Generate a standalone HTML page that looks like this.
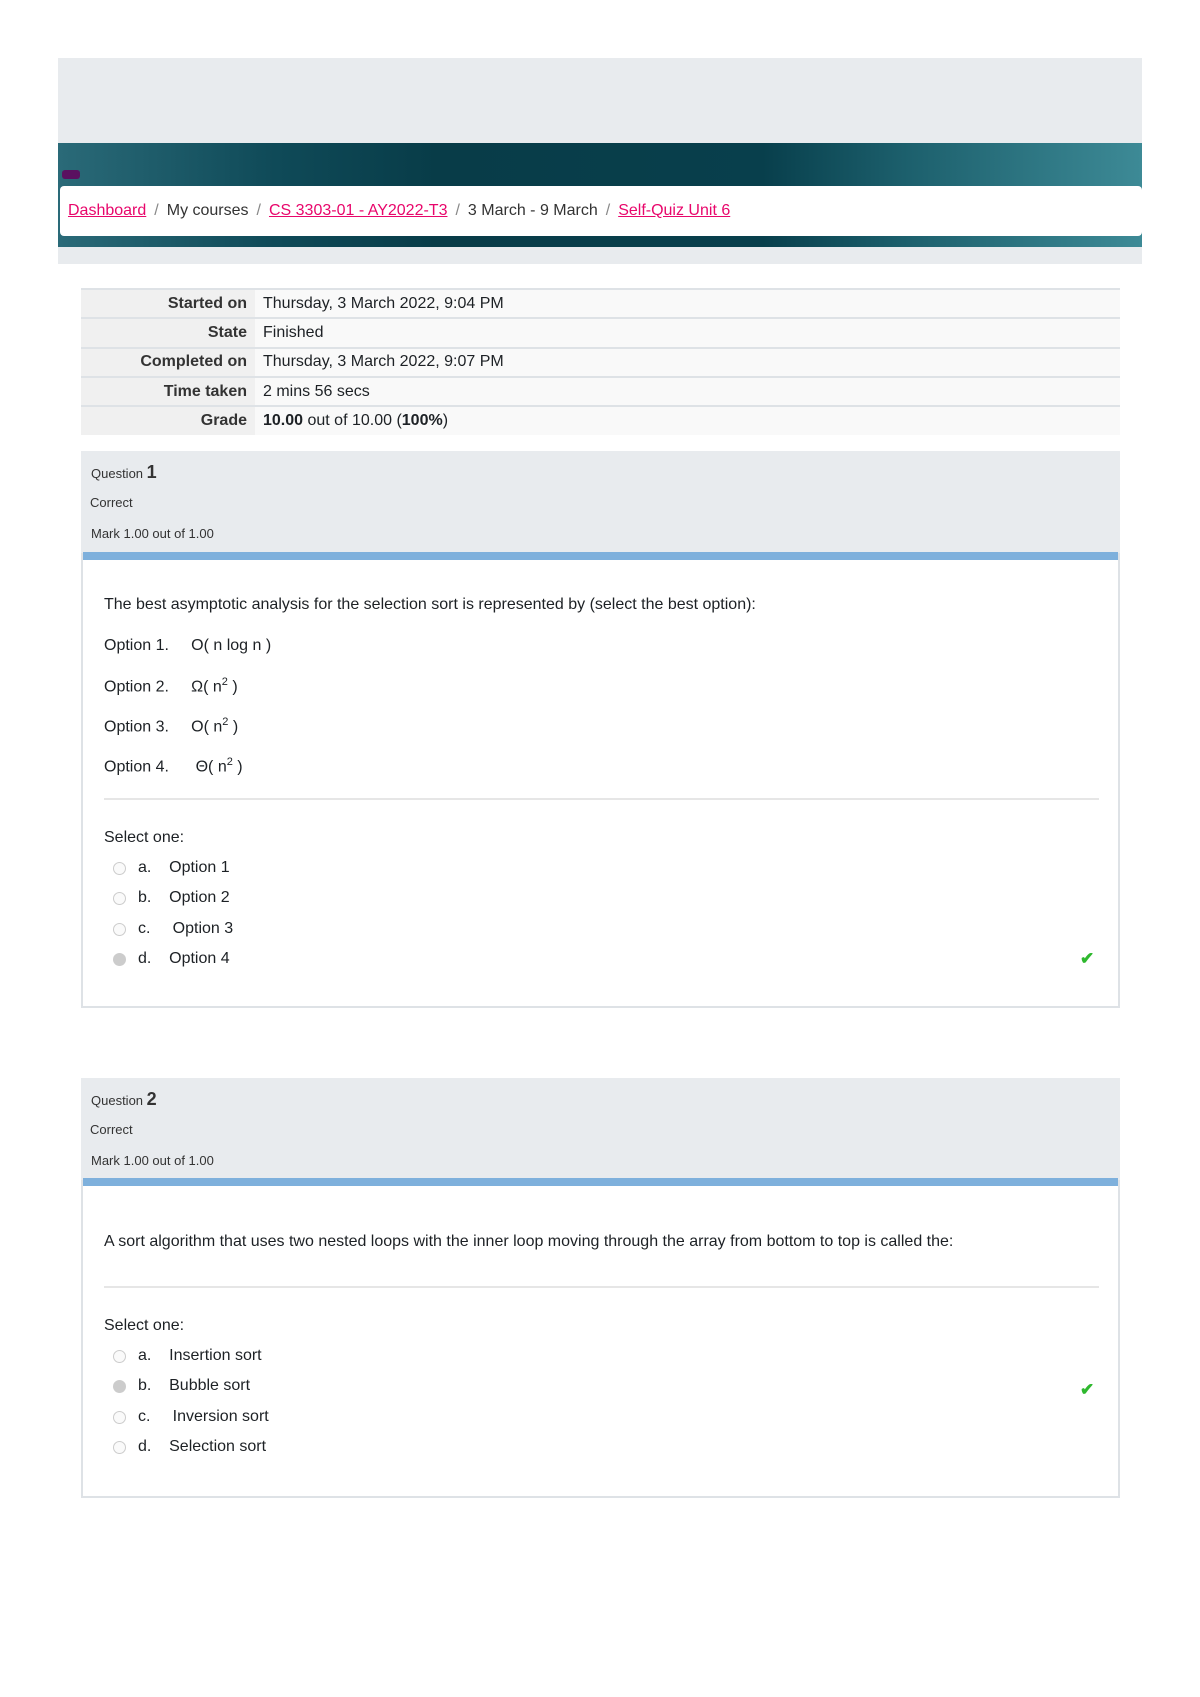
<!DOCTYPE html>
<html><head><meta charset="utf-8"><style>
*{margin:0;padding:0;box-sizing:border-box}
body{width:1200px;height:1697px;background:#fff;font-family:"Liberation Sans",sans-serif;color:#1d2125;position:relative;overflow:hidden}
.a{position:absolute;white-space:nowrap}
.hdr{left:58px;top:58px;width:1084px;height:206px;background:#e8ebee}
.ban{left:58px;top:143px;width:1084px;height:104px;background:linear-gradient(90deg,#2a6a78 0%,#0f4a58 20%,#083c48 35%,#083f4c 65%,#1c5f6c 78%,#3d8a96 100%)}
.crumb{left:60px;top:186px;width:1082px;height:50px;background:#fff;border-radius:4px;font-size:16px;line-height:50px;padding-left:8px;color:#333}
.crumb a{color:#e8066b;text-decoration:underline}
.crumb .s{color:#888;margin:0 8px}
table{position:absolute;left:81px;top:288px;width:1039px;border-collapse:collapse;font-size:16px}
td{height:29.3px;border-top:2px solid #dee2e6;padding:0 8px}
td.l{width:174px;background:#f0f0f0;text-align:right;font-weight:bold;color:#333}
td.v{background:#f9f9f9}
.card{left:81px;width:1039px;border:2px solid #dee2e6;background:#fff}
.qh{left:81px;width:1039px;background:#e8ebee;font-size:13px;color:#333}
.bar{left:83px;width:1035px;height:8px;background:#7eb0dc}
.t{font-size:16px;color:#1d2125}
.hr{left:104px;width:995px;height:2px;background:#e6e6e6}
.r{width:13px;height:13px;border-radius:50%;border:1px solid #ccc;background:#fafafa}
.r.on{background:#ccc}
.ck{color:#2eb82e;font-size:17px;font-weight:bold}
</style></head><body>
<div class="a hdr"></div>
<div class="a ban"></div>
<div class="a" style="left:62px;top:170px;width:18px;height:9px;background:#5a1060;border-radius:3px"></div>
<div class="a crumb"><a>Dashboard</a><span class="s">/</span>My courses<span class="s">/</span><a>CS 3303-01 - AY2022-T3</a><span class="s">/</span>3 March - 9 March<span class="s">/</span><a>Self-Quiz Unit 6</a></div>

<table>
<tr><td class="l">Started on</td><td class="v">Thursday, 3 March 2022, 9:04 PM</td></tr>
<tr><td class="l">State</td><td class="v">Finished</td></tr>
<tr><td class="l">Completed on</td><td class="v">Thursday, 3 March 2022, 9:07 PM</td></tr>
<tr><td class="l">Time taken</td><td class="v">2 mins 56 secs</td></tr>
<tr><td class="l">Grade</td><td class="v"><b>10.00</b> out of 10.00 (<b>100%</b>)</td></tr>
</table>

<!-- Q1 -->
<div class="a card" style="top:451px;height:557px"></div>
<div class="a qh" style="top:451px;height:102px"></div>
<div class="a bar" style="top:552px"></div>
<div class="a" style="left:91px;top:462px;font-size:13px;color:#333">Question <b style="font-size:18px">1</b></div>
<div class="a" style="left:90px;top:495px;font-size:13px;color:#333">Correct</div>
<div class="a" style="left:91px;top:526px;font-size:13px;color:#333">Mark 1.00 out of 1.00</div>
<div class="a t" style="left:104px;top:596px">The best asymptotic analysis for the selection sort is represented by (select the best option):</div>
<div class="a t" style="left:104px;top:637px">Option 1.&nbsp;&nbsp;&nbsp;&nbsp; O( n log n )</div>
<div class="a t" style="left:104px;top:676px">Option 2.&nbsp;&nbsp;&nbsp;&nbsp; Ω( n<sup style="font-size:11px">2</sup> )</div>
<div class="a t" style="left:104px;top:716px">Option 3.&nbsp;&nbsp;&nbsp;&nbsp; O( n<sup style="font-size:11px">2</sup> )</div>
<div class="a t" style="left:104px;top:756px">Option 4.&nbsp;&nbsp;&nbsp;&nbsp;&nbsp; Θ( n<sup style="font-size:11px">2</sup> )</div>
<div class="a hr" style="top:798px"></div>
<div class="a t" style="left:104px;top:829px">Select one:</div>
<div class="a r" style="left:113px;top:862px"></div><div class="a t" style="left:138px;top:859px">a.&nbsp;&nbsp;&nbsp; Option 1</div>
<div class="a r" style="left:113px;top:892px"></div><div class="a t" style="left:138px;top:889px">b.&nbsp;&nbsp;&nbsp; Option 2</div>
<div class="a r" style="left:113px;top:923px"></div><div class="a t" style="left:138px;top:920px">c.&nbsp;&nbsp;&nbsp;&nbsp; Option 3</div>
<div class="a r on" style="left:113px;top:953px"></div><div class="a t" style="left:138px;top:950px">d.&nbsp;&nbsp;&nbsp; Option 4</div>
<div class="a ck" style="left:1080px;top:949px">✔</div>

<!-- Q2 -->
<div class="a card" style="top:1078px;height:420px"></div>
<div class="a qh" style="top:1078px;height:102px"></div>
<div class="a bar" style="top:1178px"></div>
<div class="a" style="left:91px;top:1089px;font-size:13px;color:#333">Question <b style="font-size:18px">2</b></div>
<div class="a" style="left:90px;top:1122px;font-size:13px;color:#333">Correct</div>
<div class="a" style="left:91px;top:1153px;font-size:13px;color:#333">Mark 1.00 out of 1.00</div>
<div class="a t" style="left:104px;top:1233px">A sort algorithm that uses two nested loops with the inner loop moving through the array from bottom to top is called the:</div>
<div class="a hr" style="top:1286px"></div>
<div class="a t" style="left:104px;top:1317px">Select one:</div>
<div class="a r" style="left:113px;top:1350px"></div><div class="a t" style="left:138px;top:1347px">a.&nbsp;&nbsp;&nbsp; Insertion sort</div>
<div class="a r on" style="left:113px;top:1380px"></div><div class="a t" style="left:138px;top:1377px">b.&nbsp;&nbsp;&nbsp; Bubble sort</div>
<div class="a r" style="left:113px;top:1411px"></div><div class="a t" style="left:138px;top:1408px">c.&nbsp;&nbsp;&nbsp;&nbsp; Inversion sort</div>
<div class="a r" style="left:113px;top:1441px"></div><div class="a t" style="left:138px;top:1438px">d.&nbsp;&nbsp;&nbsp; Selection sort</div>
<div class="a ck" style="left:1080px;top:1380px">✔</div>
</body></html>
